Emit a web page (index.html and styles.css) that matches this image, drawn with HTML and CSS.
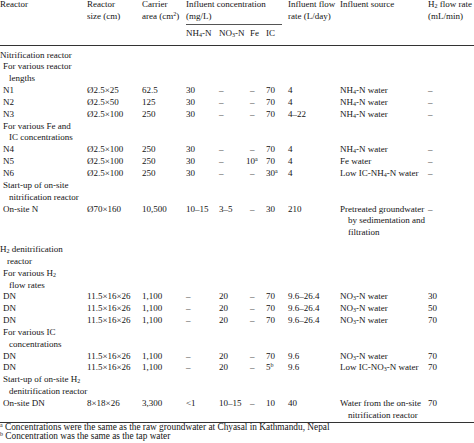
FILE: index.html
```
<!DOCTYPE html>
<html>
<head>
<meta charset="utf-8">
<link rel="stylesheet" href="styles.css">
</head>
<body>
<table class="tbl">
<colgroup>
<col class="c1"><col class="c2"><col class="c3"><col class="c4"><col class="c5"><col class="c6"><col class="c7"><col class="c8"><col class="c9"><col class="c10">
</colgroup>
<thead>
<tr>
<th rowspan="2">Reactor</th>
<th rowspan="2">Reactor<br>size (cm)</th>
<th rowspan="2">Carrier<br>area (cm<sup>2</sup>)</th>
<th colspan="4" class="conc"><div class="conc-in">Influent concentration<br>(mg/L)</div></th>
<th rowspan="2">Influent flow<br>rate (L/day)</th>
<th rowspan="2">Influent source</th>
<th rowspan="2">H<sub>2</sub> flow rate<br>(mL/min)</th>
</tr>
<tr class="sub">
<th>NH<sub>4</sub>-N</th><th>NO<sub>3</sub>-N</th><th>Fe</th><th>IC</th>
</tr>
</thead>
<tbody>
<tr class="first"><td class="sec" colspan="10">Nitrification reactor</td></tr>
<tr><td class="grp">For various reactor<br>lengths</td><td colspan="9"></td></tr>
<tr><td class="item">N1</td><td>Ø2.5×25</td><td>62.5</td><td>30</td><td>–</td><td>–</td><td>70</td><td>4</td><td class="src">NH<sub>4</sub>-N water</td><td>–</td></tr>
<tr><td class="item">N2</td><td>Ø2.5×50</td><td>125</td><td>30</td><td>–</td><td>–</td><td>70</td><td>4</td><td class="src">NH<sub>4</sub>-N water</td><td>–</td></tr>
<tr><td class="item">N3</td><td>Ø2.5×100</td><td>250</td><td>30</td><td>–</td><td>–</td><td>70</td><td>4–22</td><td class="src">NH<sub>4</sub>-N water</td><td>–</td></tr>
<tr><td class="grp">For various Fe and<br>IC concentrations</td><td colspan="9"></td></tr>
<tr><td class="item">N4</td><td>Ø2.5×100</td><td>250</td><td>30</td><td>–</td><td>–</td><td>70</td><td>4</td><td class="src">NH<sub>4</sub>-N water</td><td>–</td></tr>
<tr><td class="item">N5</td><td>Ø2.5×100</td><td>250</td><td>30</td><td>–</td><td class="fe">10<sup>a</sup></td><td>70</td><td>4</td><td class="src">Fe water</td><td>–</td></tr>
<tr><td class="item">N6</td><td>Ø2.5×100</td><td>250</td><td>30</td><td>–</td><td>–</td><td>30<sup>a</sup></td><td>4</td><td class="src">Low IC-NH<sub>4</sub>-N water</td><td>–</td></tr>
<tr><td class="grp">Start-up of on-site<br>nitrification reactor</td><td colspan="9"></td></tr>
<tr class="gap"><td class="item">On-site N</td><td>Ø70×160</td><td>10,500</td><td>10–15</td><td>3–5</td><td>–</td><td>30</td><td>210</td><td class="src">Pretreated groundwater<br>by sedimentation and<br>filtration</td><td>–</td></tr>
<tr><td class="sec">H<sub>2</sub> denitrification<br>reactor</td><td colspan="9"></td></tr>
<tr><td class="grp">For various H<sub>2</sub><br>flow rates</td><td colspan="9"></td></tr>
<tr><td class="item">DN</td><td>11.5×16×26</td><td>1,100</td><td>–</td><td>20</td><td>–</td><td>70</td><td>9.6–26.4</td><td class="src">NO<sub>3</sub>-N water</td><td>30</td></tr>
<tr><td class="item">DN</td><td>11.5×16×26</td><td>1,100</td><td>–</td><td>20</td><td>–</td><td>70</td><td>9.6–26.4</td><td class="src">NO<sub>3</sub>-N water</td><td>50</td></tr>
<tr><td class="item">DN</td><td>11.5×16×26</td><td>1,100</td><td>–</td><td>20</td><td>–</td><td>70</td><td>9.6–26.4</td><td class="src">NO<sub>3</sub>-N water</td><td>70</td></tr>
<tr><td class="grp">For various IC<br>concentrations</td><td colspan="9"></td></tr>
<tr><td class="item">DN</td><td>11.5×16×26</td><td>1,100</td><td>–</td><td>20</td><td>–</td><td>70</td><td>9.6</td><td class="src">NO<sub>3</sub>-N water</td><td>70</td></tr>
<tr><td class="item">DN</td><td>11.5×16×26</td><td>1,100</td><td>–</td><td>20</td><td>–</td><td>5<sup>b</sup></td><td>9.6</td><td class="src">Low IC-NO<sub>3</sub>-N water</td><td>70</td></tr>
<tr><td class="grp">Start-up of on-site H<sub>2</sub><br>denitrification reactor</td><td colspan="9"></td></tr>
<tr class="last"><td class="item">On-site DN</td><td>8×18×26</td><td>3,300</td><td>&lt;1</td><td>10–15</td><td>–</td><td>10</td><td>40</td><td class="src">Water from the on-site<br>nitrification reactor</td><td>70</td></tr>
</tbody>
</table>
<div class="notes">
<p class="note"><sup>a</sup> Concentrations were the same as the raw groundwater at Chyasal in Kathmandu, Nepal</p>
<p class="note"><sup>b</sup> Concentration was the same as the tap water</p>
</div>
</body>
</html>
```

FILE: styles.css
```
html, body {
  margin: 0;
  padding: 0;
  background: #ffffff;
}
body {
  width: 474px;
  height: 443px;
  overflow: hidden;
  font-family: "Liberation Serif", "Times New Roman", serif;
  font-size: 9px;
  color: #141414;
}
.tbl {
  border-collapse: collapse;
  table-layout: fixed;
  width: 474px;
  margin-top: -1px;
}
.c1 { width: 87px; }
.c2 { width: 55px; }
.c3 { width: 44px; }
.c4 { width: 33px; }
.c5 { width: 31px; }
.c6 { width: 16px; }
.c7 { width: 22px; }
.c8 { width: 52px; }
.c9 { width: 88px; }
.c10 { width: 46px; }
th, td {
  padding: 0;
  vertical-align: top;
  text-align: left;
  font-weight: normal;
  line-height: 11.85px;
  white-space: nowrap;
  overflow: visible;
}
sup, sub {
  font-size: 6px;
  line-height: 0;
}
sup { vertical-align: 3px; }
sub { vertical-align: -1px; }
thead {
  border-bottom: 1.6px solid #333;
}
.conc-in {
  border-bottom: 1px solid #555;
  margin-right: 6px;
  padding-bottom: 1px;
}
.sub th {
  padding-top: 3px;
  padding-bottom: 5px;
}
.first td {
  padding-top: 4px;
}
.gap td {
  padding-bottom: 5px;
}
.last td {
  padding-bottom: 0;
}
tbody {
  border-bottom: 1.6px solid #333;
}
.sec {
  padding-left: 7px;
  text-indent: -7px;
}
.grp {
  padding-left: 9px;
  text-indent: -6px;
}
.item {
  padding-left: 3px;
}
.src {
  padding-left: 8px;
  text-indent: -8px;
}
.fe {
  text-indent: -4px;
}
.notes {
  padding-top: 0;
}
.note {
  margin: 0;
  font-size: 9.3px;
  line-height: 9px;
}
```
